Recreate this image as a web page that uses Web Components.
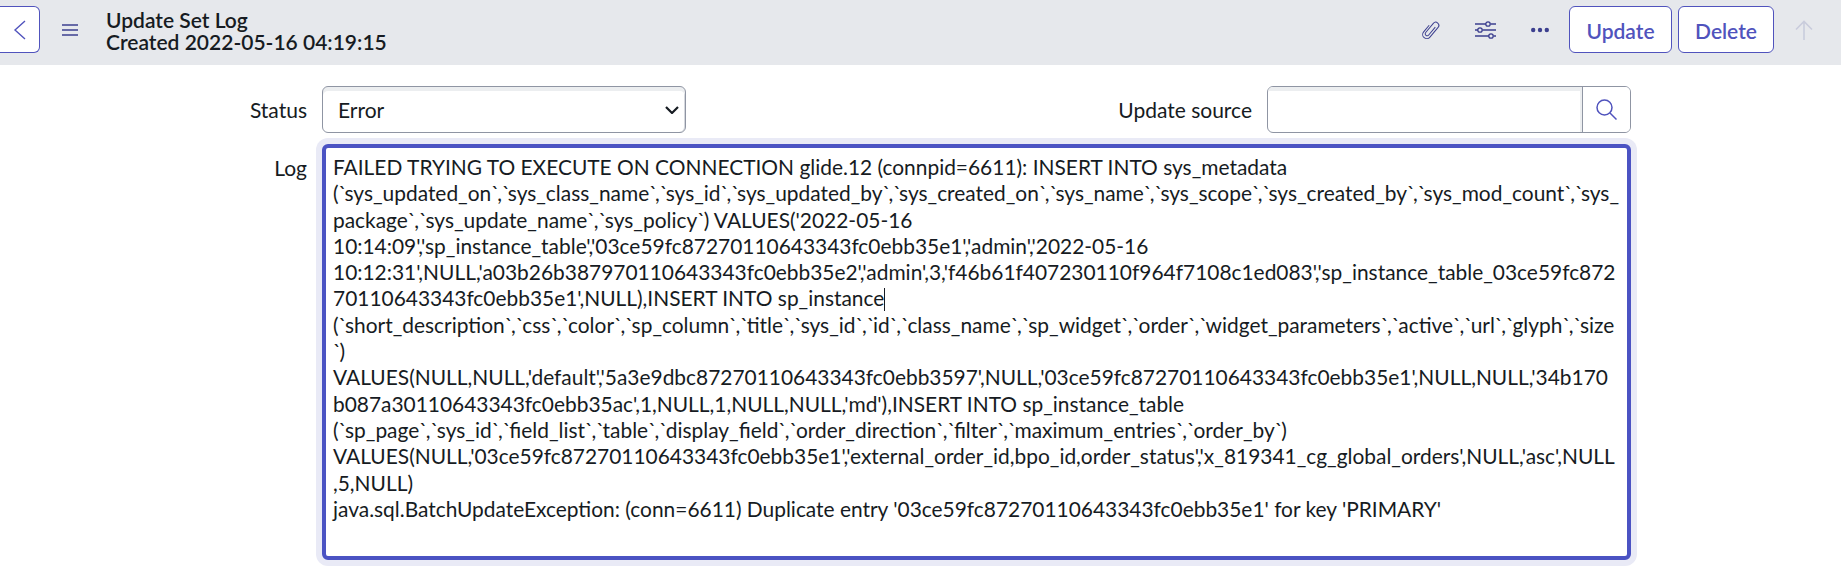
<!DOCTYPE html>
<html lang="en">
<head>
<meta charset="utf-8">
<title>Update Set Log</title>
<style>
  html, body { margin: 0; padding: 0; background: #fff; overflow: hidden; }
  body { font-family: Lato, "Liberation Sans", sans-serif; color: #161b22; width: 1841px; height: 566px; }
</style>
</head>
<body>
<form-header>
  <span slot="title">Update Set Log</span>
  <span slot="subtitle">Created 2022-05-16 04:19:15</span>
</form-header>
<log-form></log-form>

<script>
'use strict';

const ACCENT = '#5053bd';
const ICON = '#3c3f8f';

class FormHeader extends HTMLElement {
  constructor() {
    super();
    this.attachShadow({ mode: 'open' }).innerHTML = `
      <style>
        :host { display: flex; align-items: center; height: 65px; padding-bottom: 6px; box-sizing: border-box; background: #e6e8ec; }
        .back {
          width: 40px; height: 47px; box-sizing: border-box;
          display: flex; align-items: center; justify-content: center;
          background: #fff; border: 1px solid ${ACCENT}; border-left: 0;
          border-radius: 0 6px 6px 0;
        }
        .menu { margin-left: 22px; width: 16px; height: 12px; }
        .titles { margin-left: 28px; padding-top: 3px; font-size: 21px; font-weight: 600; line-height: 22px; color: #161b22; }
        .titles div { white-space: nowrap; }
        .spacer { flex: 1; }
        .tools { display: flex; align-items: center; }
        .tool { display: block; }
        .btn {
          height: 47px; box-sizing: border-box; padding-top: 1px; background: #fff; color: ${ACCENT};
          border: 1px solid ${ACCENT}; border-radius: 6px; display: flex; align-items: center;
          justify-content: center; font-size: 21px; font-weight: 600;
        }
      </style>
      <div class="back">
        <svg width="13" height="20" viewBox="0 0 13 20" fill="none" stroke="${ACCENT}" stroke-width="1.4"><path d="M12 1 L2 10 L12 19"/></svg>
      </div>
      <svg class="menu" viewBox="0 0 16 12" fill="none" stroke="${ICON}" stroke-width="1.7"><path d="M0 1h16M0 6h16M0 11h16"/></svg>
      <div class="titles">
        <div><slot name="title"></slot></div>
        <div><slot name="subtitle"></slot></div>
      </div>
      <div class="spacer"></div>
      <div class="tools">
        <svg class="tool" style="margin-right:34px" width="20" height="22" viewBox="0 0 20 22" fill="none" stroke="${ICON}" stroke-width="1.2">
          <g transform="translate(10 11) rotate(40) scale(.82)">
            <path d="M1.8 -6 V6.5 a2.4 2.4 0 0 1 -4.8 0 V-8 a3.8 3.8 0 0 1 7.6 0 V7.5 a5 5 0 0 1 -10 0 V-3"/>
          </g>
        </svg>
        <svg class="tool" style="margin-right:35px" width="21" height="18" viewBox="0 0 21 18" fill="none" stroke="${ICON}" stroke-width="1.7">
          <path d="M0 3h11M15.500 3h5.500M0 9h3M7.500 9h13.500M0 15h14M18.500 15h2.500"/>
          <g stroke-width="1.3"><circle cx="13" cy="3" r="2.200"/><circle cx="5" cy="9" r="2.200"/><circle cx="16" cy="15" r="2.200"/></g>
        </svg>
        <svg class="tool" style="margin-right:20px" width="18" height="6" viewBox="0 0 18 6" fill="${ICON}">
          <circle cx="2.200" cy="3" r="2.200"/><circle cx="9" cy="3" r="2.200"/><circle cx="15.800" cy="3" r="2.200"/>
        </svg>
        <div class="btn" style="width:103px;margin-right:6px">Update</div>
        <div class="btn" style="width:96px;margin-right:21px">Delete</div>
        <svg class="tool" style="margin-right:28px" width="18" height="20" viewBox="0 0 18 20" fill="none" stroke="#c9ccdc" stroke-width="1.6"><path d="M9 20V1.500M1 9.500l8-8 8 8"/></svg>
      </div>`;
  }
}

class FormField extends HTMLElement {
  constructor() {
    super();
    this.attachShadow({ mode: 'open' }).innerHTML = `
      <style>
        :host { display: flex; align-items: flex-start; font-size: 21px; color: #161b22; }
        .label { text-align: right; padding-right: 15px; box-sizing: border-box; width: var(--label-w, 322px); line-height: 47px; white-space: nowrap; }
      </style>
      <div class="label"><slot name="label"></slot></div>
      <slot></slot>`;
  }
}

class LogForm extends HTMLElement {
  constructor() {
    super();
    const lines = [
      "FAILED TRYING TO EXECUTE ON CONNECTION glide.12 (connpid=6611): INSERT INTO sys_metadata",
      "(`sys_updated_on`,`sys_class_name`,`sys_id`,`sys_updated_by`,`sys_created_on`,`sys_name`,`sys_scope`,`sys_created_by`,`sys_mod_count`,`sys_",
      "package`,`sys_update_name`,`sys_policy`) VALUES('2022-05-16",
      "10:14:09','sp_instance_table','03ce59fc87270110643343fc0ebb35e1','admin','2022-05-16",
      "10:12:31',NULL,'a03b26b387970110643343fc0ebb35e2','admin',3,'f46b61f407230110f964f7108c1ed083','sp_instance_table_03ce59fc872",
      "70110643343fc0ebb35e1',NULL),INSERT INTO sp_instance",
      "(`short_description`,`css`,`color`,`sp_column`,`title`,`sys_id`,`id`,`class_name`,`sp_widget`,`order`,`widget_parameters`,`active`,`url`,`glyph`,`size",
      "`)",
      "VALUES(NULL,NULL,'default','5a3e9dbc87270110643343fc0ebb3597',NULL,'03ce59fc87270110643343fc0ebb35e1',NULL,NULL,'34b170",
      "b087a30110643343fc0ebb35ac',1,NULL,1,NULL,NULL,'md'),INSERT INTO sp_instance_table",
      "(`sp_page`,`sys_id`,`field_list`,`table`,`display_field`,`order_direction`,`filter`,`maximum_entries`,`order_by`)",
      "VALUES(NULL,'03ce59fc87270110643343fc0ebb35e1','external_order_id,bpo_id,order_status','x_819341_cg_global_orders',NULL,'asc',NULL",
      ",5,NULL)",
      "java.sql.BatchUpdateException: (conn=6611) Duplicate entry '03ce59fc87270110643343fc0ebb35e1' for key 'PRIMARY'"
    ];
    const root = this.attachShadow({ mode: 'open' });
    root.innerHTML = `
      <style>
        :host { display: block; }
        .row { display: flex; padding-top: 21px; }
        .select {
          width: 364px; height: 47px; box-sizing: border-box; border: 1px solid #8f95a3; border-radius: 6px;
          box-shadow: inset 0 4px 0 #eceef0, inset -1px 0 0 #d5d8de; background: #fff; display: flex; align-items: center;
          justify-content: space-between; padding: 0 6px 0 15px; font-size: 21px; color: #161b22;
        }
        .lookup { display: flex; width: 364px; height: 47px; box-sizing: border-box; border: 1px solid #8f95a3; border-radius: 6px; overflow: hidden; }
        .lookup .input { flex: 1; box-shadow: inset 0 4px 0 #eceef0, inset -2px 0 0 #eceef0; }
        .lookup .search { width: 47px; border-left: 1px solid #8f95a3; display: flex; align-items: center; justify-content: center; background: #fff; }
        .logrow { margin-top: 11px; }
        .log {
          width: 1309px; height: 416px; box-sizing: border-box; border: 4px solid #4b53c3; border-radius: 6px;
          box-shadow: 0 0 0 6px #e9eaf6; background: #fff; padding: 6px 7px;
          font-size: 20.92px; line-height: 26.3px; color: #161b22; white-space: pre; overflow: hidden;
        }
        .tick { letter-spacing: -1.95px; }
        .tick.tight { letter-spacing: -2.48px; }
        .caret { display: inline-block; width: 0; height: 23px; border-left: 1.5px solid #161b22; vertical-align: -5px; }
      </style>
      <div class="row">
        <form-field>
          <span slot="label">Status</span>
          <div class="select"><span>Error</span>
            <svg width="14" height="8" viewBox="0 0 14 8" fill="none" stroke="#161b22" stroke-width="2.200"><path d="M1 1l6 6 6-6"/></svg>
          </div>
        </form-field>
        <form-field style="--label-w:581px">
          <span slot="label">Update source</span>
          <div class="lookup">
            <div class="input"></div>
            <div class="search"><svg width="21" height="21" viewBox="0 0 21 21" fill="none" stroke="${ACCENT}" stroke-width="1.500"><circle cx="8.500" cy="8.500" r="7.500"/><path d="M14 14l6.500 6.500"/></svg></div>
          </div>
        </form-field>
      </div>
      <form-field class="logrow">
        <span slot="label">Log</span>
        <div class="log"></div>
      </form-field>`;
    const log = root.querySelector('.log');
    lines.forEach((line, i) => {
      // backticks run narrower in the reference's Lato than in this one
      line.split('`').forEach((part, j) => {
        if (j > 0) {
          const tick = document.createElement('span');
          tick.className = i === 1 ? 'tick tight' : 'tick';
          tick.textContent = '`';
          log.append(tick);
        }
        log.append(part);
      });
      // the text cursor sits at the end of this line in the reference
      if (i === 5) {
        const caret = document.createElement('span');
        caret.className = 'caret';
        log.append(caret);
      }
      if (i < lines.length - 1) log.append('\n');
    });
  }
}

customElements.define('form-header', FormHeader);
customElements.define('form-field', FormField);
customElements.define('log-form', LogForm);
</script>
</body>
</html>
